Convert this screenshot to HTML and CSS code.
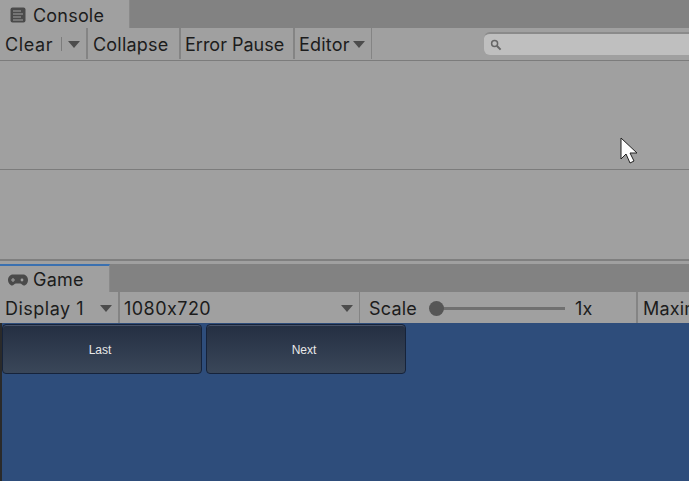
FILE: index.html
```html
<!DOCTYPE html>
<html lang="en">
<head>
    <meta charset="UTF-8">
    <title>Console / Game</title>
    <link rel="stylesheet" href="styles.css">
</head>
<body>
    <section class="console-panel">
        <div class="tab-strip">
            <div class="tab console-tab">
                <svg class="tab-icon" width="16" height="16" viewBox="0 0 16 16">
                    <rect x="0.5" y="0.5" width="15" height="15" rx="2" fill="#4a4a4a"/>
                    <path d="M3 4h8M3 7h10M3 10h8M3 13h10" stroke="#a0a0a0" stroke-width="1.2"/>
                </svg>
                <span>Console</span>
            </div>
        </div>
        <div class="toolbar console-toolbar">
            <div class="tool clear-tool">
                <span>Clear</span>
                <i class="tool-divider"></i>
                <i class="arrow"></i>
            </div>
            <div class="tool collapse-tool">Collapse</div>
            <div class="tool pause-tool">Error Pause</div>
            <div class="tool editor-tool">
                <span>Editor</span>
                <i class="arrow"></i>
            </div>
            <div class="search-box">
                <svg width="12" height="12" viewBox="0 0 12 12">
                    <circle cx="4.6" cy="4.6" r="3" fill="none" stroke="#666" stroke-width="1.5"/>
                    <path d="M7 7l3.6 3.6" stroke="#666" stroke-width="2"/>
                </svg>
            </div>
        </div>
        <div class="log-list"></div>
        <div class="log-detail"></div>
    </section>

    <section class="game-panel">
        <div class="tab-strip">
            <div class="tab game-tab">
                <svg class="tab-icon pad-icon" width="22" height="14" viewBox="0 0 22 14">
                    <path d="M6 1.500h10c3 0 5 2.500 5 5.500s-2 5.500-4 5.500c-1.500 0-2.500-2-4-2H9c-1.500 0-2.500 2-4 2s-4-2.500-4-5.500 2-5.500 5-5.500z" fill="#4a4a4a"/>
                    <path d="M4 7h4M6 5v4" stroke="#a0a0a0" stroke-width="1.100"/>
                    <circle cx="15" cy="7" r="1.400" fill="#a0a0a0"/>
                </svg>
                <span>Game</span>
            </div>
        </div>
        <div class="toolbar game-toolbar">
            <div class="tool display-tool">
                <span>Display 1</span>
                <i class="arrow"></i>
            </div>
            <div class="tool size-tool">
                <span>1080x720</span>
                <i class="arrow"></i>
            </div>
            <div class="tool scale-tool">
                <span class="scale-label">Scale</span>
                <div class="slider">
                    <i class="slider-thumb"></i>
                </div>
                <span class="scale-value">1x</span>
            </div>
            <div class="tool maximize-tool">Maximize On Play</div>
        </div>
        <div class="game-view">
            <button class="game-btn">Last</button>
            <button class="game-btn">Next</button>
        </div>
    </section>

    <svg class="cursor" width="20" height="28" viewBox="0 0 20 28">
        <path d="M1 1v21l5-5 4 9 4-2-4-8h7z" fill="#fff" stroke="#222" stroke-width="1"/>
    </svg>
</body>
</html>
```

FILE: styles.css
```css
* {
    box-sizing: border-box;
}

body {
    margin: 0;
    overflow: hidden;
    position: relative;
    height: 481px;
    background: #a0a0a0;
    color: #1c1c1c;
    font-family: 'Inter', 'Liberation Sans', sans-serif;
    font-size: 18px;
    letter-spacing: 0.2px;
    font-feature-settings: "calt" 0;
}

/* Вкладки */
.tab-strip {
    display: flex;
    height: 28px;
    background: #828282;
}

.tab {
    display: flex;
    align-items: center;
    height: 28px;
    background: #a0a0a0;
}

.console-tab {
    width: 130px;
    padding-left: 10px;
    padding-top: 2px;
    gap: 7px;
    border-right: 1px solid #8a8a8a;
}

.game-tab {
    width: 110px;
    padding-left: 7px;
    padding-top: 1px;
    gap: 4px;
    border-top: 2px solid #3a70b0;
    border-right: 1px solid #8a8a8a;
}

/* Панель инструментов */
.toolbar {
    display: flex;
    align-items: stretch;
    background: #a0a0a0;
}

.console-toolbar {
    height: 33px;
    padding-bottom: 1px;
    border-bottom: 1px solid #7c7c7c;
}

.game-toolbar {
    height: 31px;
}

.tool {
    display: flex;
    align-items: center;
    flex-shrink: 0;
    padding-left: 5px;
    padding-top: 1px;
    border-right: 2px solid #848484;
    white-space: nowrap;
}

.clear-tool { width: 88px; letter-spacing: 0.6px; }
.collapse-tool { width: 93px; }
.pause-tool { width: 114px; padding-left: 4px; letter-spacing: 0; }
.editor-tool { width: 77px; border-right-width: 1px; gap: 3px; padding-left: 4px; }

.tool-divider {
    width: 1px;
    height: 14px;
    margin: 0 6px 0 8px;
    background: #7c7c7c;
}

.arrow {
    width: 0;
    height: 0;
    border-left: 6px solid transparent;
    border-right: 6px solid transparent;
    border-top: 7px solid #4c4c4c;
}

.search-box {
    display: flex;
    align-items: center;
    width: 210px;
    height: 23px;
    margin: 4px 0 0 112px;
    padding-left: 6px;
    background: #bfbfbf;
    border-top: 2px solid #8a8a8a;
    border-radius: 6px 0 0 6px;
}

/* Область консоли */
.log-list {
    height: 109px;
    border-bottom: 1px solid #7c7c7c;
}

.log-detail {
    height: 91px;
    border-bottom: 2px solid #7f7f7f;
}

.game-panel {
    margin-top: 3px;
}

.display-tool {
    width: 120px;
    justify-content: space-between;
    padding-right: 6px;
    letter-spacing: 0.5px;
}

.size-tool {
    width: 240px;
    justify-content: space-between;
    padding-left: 4px;
    padding-right: 6px;
    border-right-width: 1px;
    letter-spacing: 0.45px;
}

.scale-tool {
    width: 278px;
    padding-left: 9px;
}

.scale-label {
    width: 67px;
}

.slider {
    display: flex;
    align-items: center;
    width: 129px;
    height: 3px;
    background: #707070;
}

.slider-thumb {
    width: 15px;
    height: 15px;
    margin-left: -7px;
    border-radius: 50%;
    background: #565656;
}

.scale-value {
    margin-left: 10px;
}

.maximize-tool {
    border-right: none;
}

/* Игровое окно */
.game-view {
    display: flex;
    gap: 4px;
    height: 158px;
    padding-top: 1px;
    background: #2e4d7b;
    border-left: 2px solid #2a2a2a;
}

.game-btn {
    width: 200px;
    height: 50px;
    padding: 1px 4px 0 0;
    border: 1px solid #16233a;
    border-radius: 4px;
    background: linear-gradient(#242f42, #3a4759);
    box-shadow: inset 0 1px 0 #47536a;
    color: #e8e8e8;
    font-family: 'Liberation Sans', sans-serif;
    font-size: 12px;
}

/* Курсор поверх всего */
.cursor {
    position: absolute;
    left: 620px;
    top: 137px;
}
```
